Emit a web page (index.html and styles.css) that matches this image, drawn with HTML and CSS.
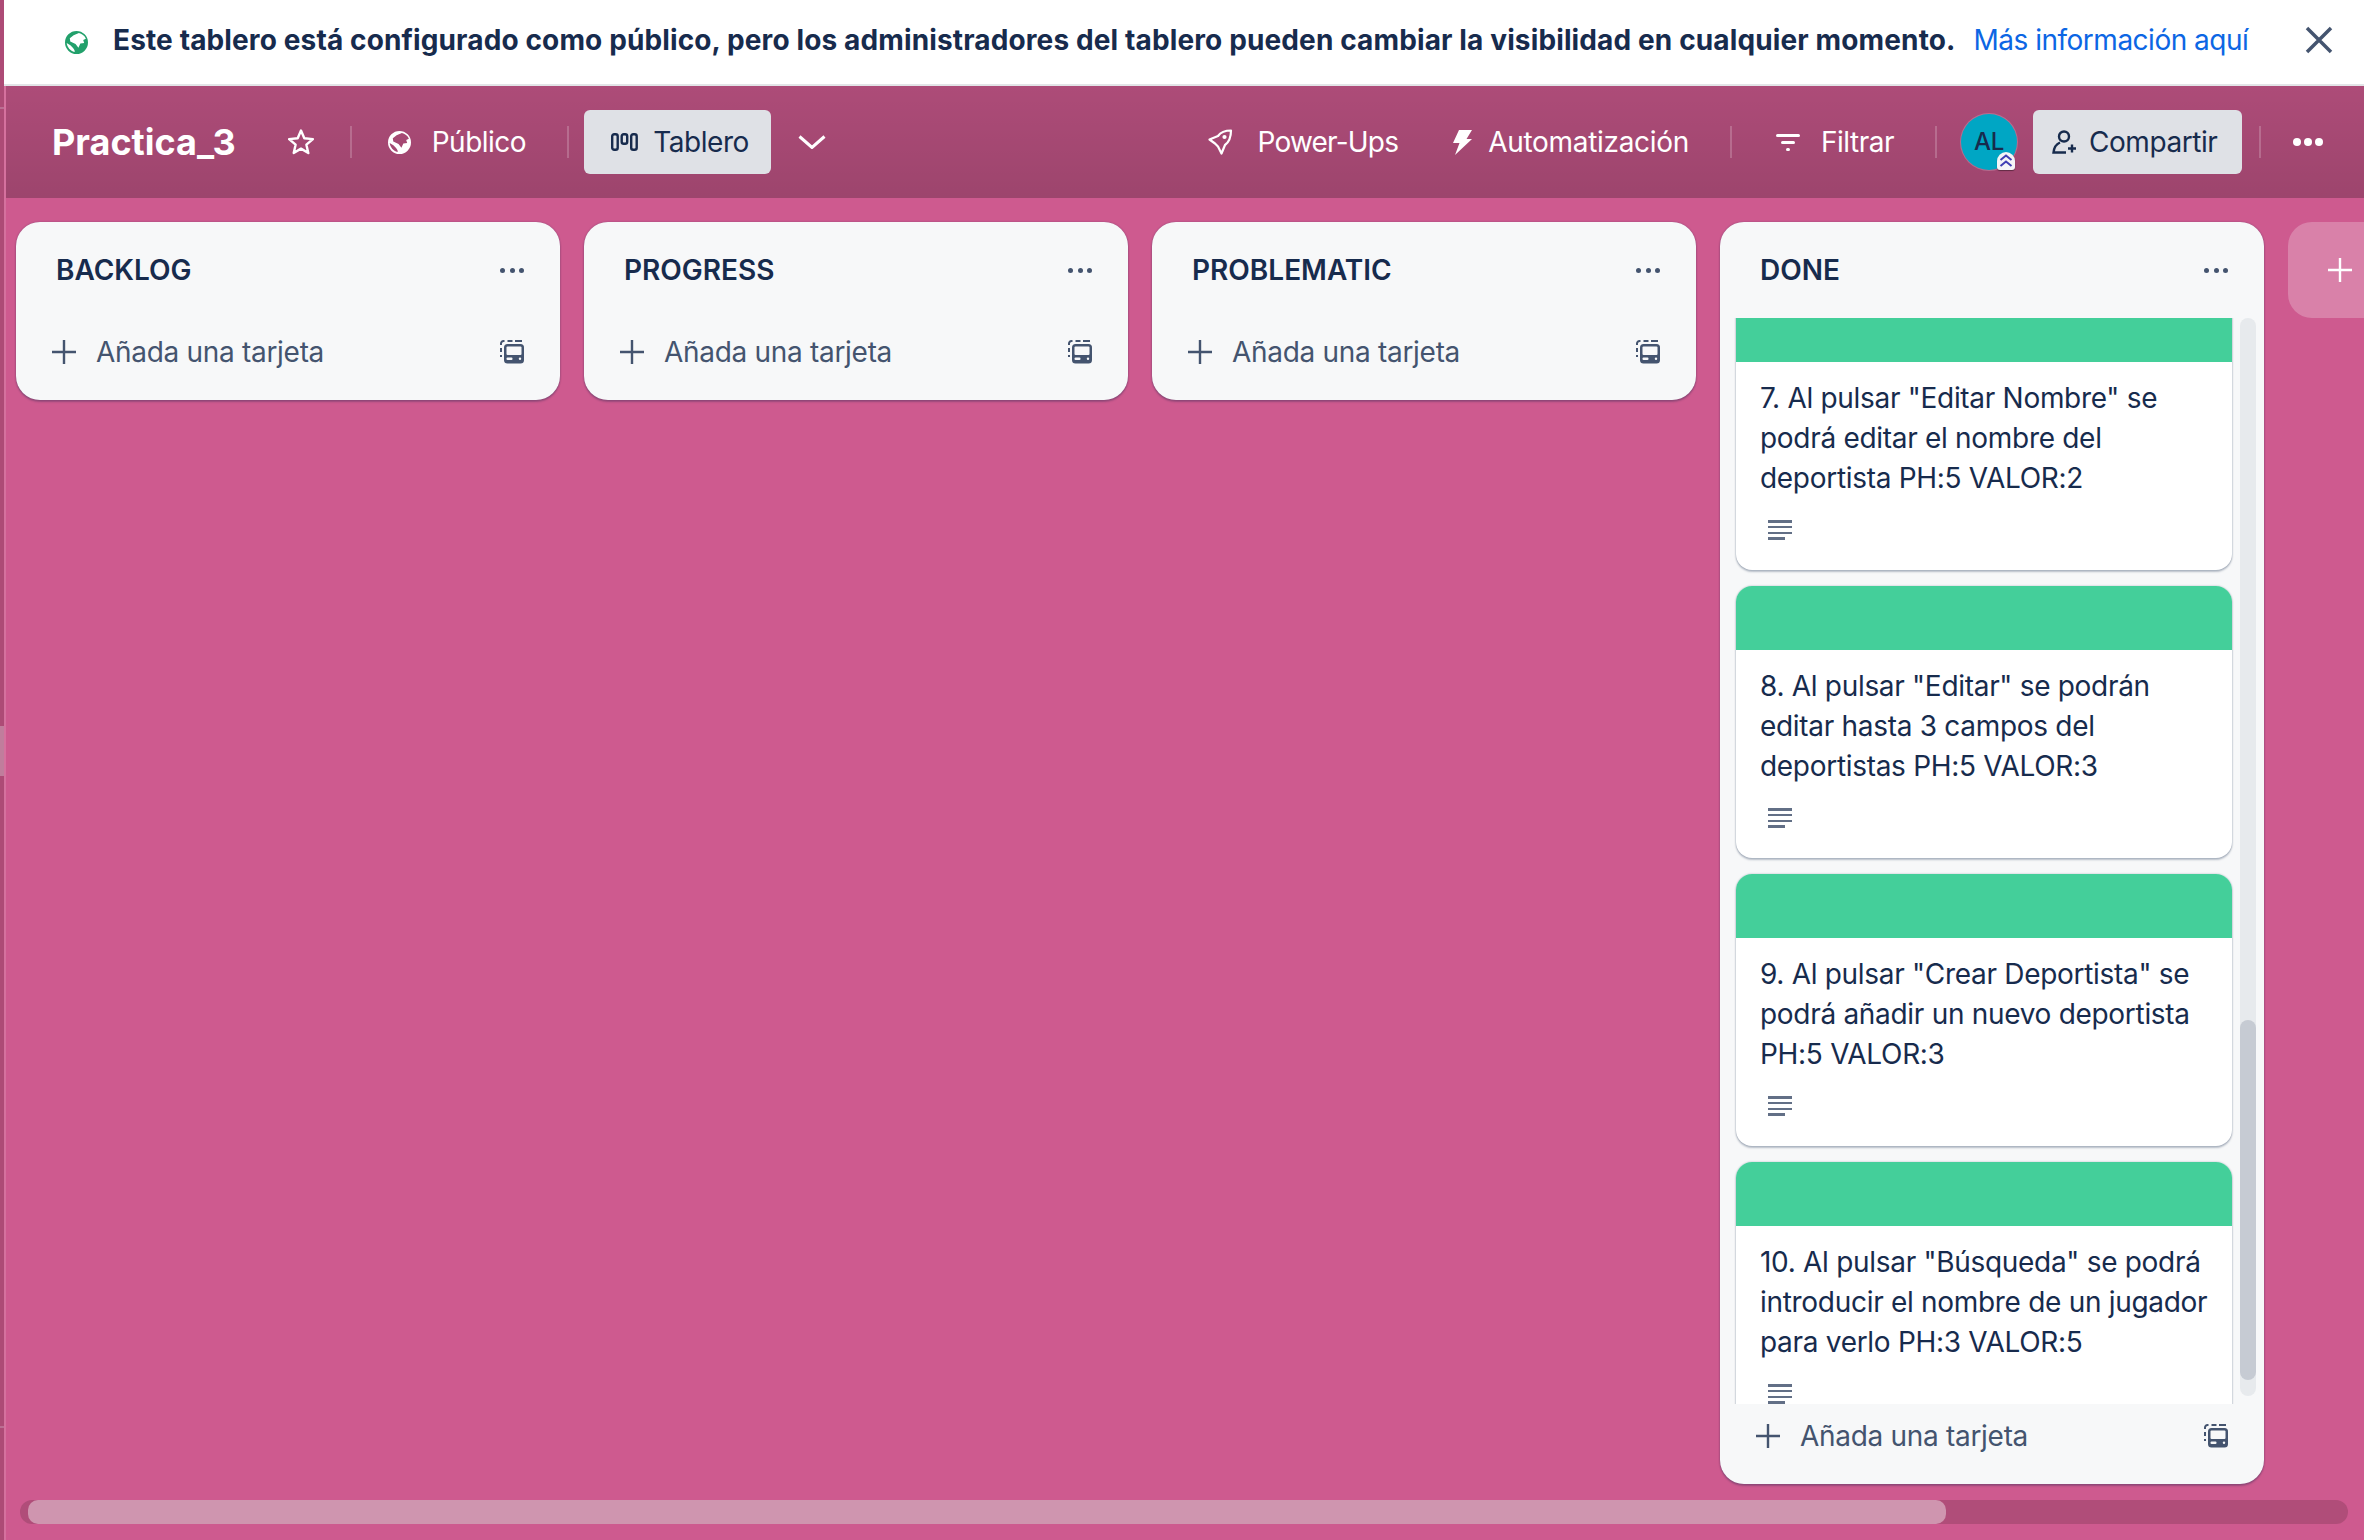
FILE: index.html
```html
<!DOCTYPE html>
<html lang="es">
<head>
  <meta charset="UTF-8">
  <title>Practica_3 | Trello</title>
  <link rel="stylesheet" href="styles.css">
</head>
<body>
  <div class="edge">
    <div class="edge-tick"></div>
    <div class="edge-thumb"></div>
    <div class="edge-tick edge-tick-low"></div>
  </div>
  <div class="page">
    <div class="banner">
      <svg class="banner-globe" viewBox="0 0 24 24"><path fill-rule="evenodd" d="M12 0a12 12 0 1 0 0 24 12 12 0 0 0 0-24zM9 4.500 14.500 2.200C17.500 2.800 20.500 5 21.800 8L19 9.500l1 3-4 .5-2 4.500-3-4-5.500-2.500-.5-3.500zM1.800 12.500C2.200 16.500 5.500 21 10 22c1-2-2.500-6.500-8.200-9.500z"/></svg>
      <span class="banner-text">Este tablero está configurado como público, pero los administradores del tablero pueden cambiar la visibilidad en cualquier momento.</span>
      <a class="banner-link" href="#">Más información aquí</a>
      <svg class="banner-close" viewBox="0 0 28 28"><path d="M2 2l24 24M26 2 2 26"/></svg>
    </div>

    <div class="workspace">
      <!-- Board header -->
      <div class="header">
        <h1 class="board-name">Practica_3</h1>
        <svg class="star" viewBox="0 0 26 26"><path d="M13 1.500l3.300 7.800 8.600.8-6.500 5.600 1.900 8.300-7.300-4.400-7.300 4.400 1.900-8.300-6.500-5.600 8.600-.8z"/></svg>
        <span class="sep sep-star"></span>
        <svg class="icon-public" viewBox="0 0 24 24"><path fill-rule="evenodd" d="M12 0a12 12 0 1 0 0 24 12 12 0 0 0 0-24zM9 4.500 14.500 2.200C17.500 2.800 20.500 5 21.800 8L19 9.500l1 3-4 .5-2 4.500-3-4-5.500-2.500-.5-3.500zM1.800 12.500C2.200 16.500 5.500 21 10 22c1-2-2.500-6.500-8.200-9.500z"/></svg>
        <span class="nav-label label-public">Público</span>
        <span class="sep sep-public"></span>
        <button class="btn btn-board">
          <svg class="icon-board" viewBox="0 0 27 18"><rect x="1.200" y="1.200" width="5.500" height="15.500" rx="2"/><rect x="10.700" y="1.200" width="5.500" height="9.500" rx="2"/><rect x="20.200" y="1.200" width="5.500" height="15.500" rx="2"/></svg>
          Tablero
        </button>
        <svg class="chevron" viewBox="0 0 28 14"><path d="M1.500 1.500 14 12.500 26.500 1.500"/></svg>

        <svg class="rocket" viewBox="0 0 25 26"><path d="M23 1.500C17 1.500 12.500 3.500 10 7L1.500 10.500 7 14.500l3 3 3.500 7L17 16c4-3 6-8 6-14.500z"/><circle cx="16.500" cy="8" r="1"/></svg>
        <span class="nav-label label-power">Power-Ups</span>
        <svg class="bolt" viewBox="0 0 19 25"><path d="M6 0h13l-5.500 9H19L2 25l4.500-12H0z"/></svg>
        <span class="nav-label label-auto">Automatización</span>
        <span class="sep sep-auto"></span>
        <svg class="filter" viewBox="0 0 24 17"><rect width="24" height="3" rx="1.500"/><rect x="5" y="7" width="14" height="3" rx="1.500"/><rect x="10" y="14" width="4" height="3" rx="1.500"/></svg>
        <span class="nav-label label-filter">Filtrar</span>
        <span class="sep sep-filter"></span>
        <div class="avatar">
          AL
          <span class="avatar-badge">
            <svg viewBox="0 0 18 16"><path d="M3.500 7 9 2.500 14.500 7M3.500 13 9 8.500 14.500 13"/></svg>
          </span>
        </div>
        <button class="btn btn-share">
          <svg class="icon-share" viewBox="0 0 25 24"><circle cx="12" cy="6.500" r="5"/><path d="M8 12.500C4.500 14 2 17.500 1.500 22.500H14M20 14.500v8M16 18.500h8"/></svg>
          Compartir
        </button>
        <span class="sep sep-share"></span>
        <div class="dots dots-header"><i></i><i></i><i></i></div>
      </div>

      <!-- Lists -->
      <div class="board">
        <div class="lists">
          <div class="list">
            <div class="list-header">
              <h2>BACKLOG</h2>
              <div class="dots"><i></i><i></i><i></i></div>
            </div>
            <div class="list-empty"></div>
            <div class="list-footer">
              <svg class="plus" viewBox="0 0 24 24"><path d="M12 0v24M0 12h24"/></svg>
              <span class="add-label">Añada una tarjeta</span>
              <svg class="template" viewBox="0 0 24 24"><rect class="template-body" x="4" y="4" width="20" height="19.500" rx="3.500"/><rect class="template-cut" x="6.500" y="6.500" width="15" height="8.500" rx="1"/><rect class="template-cut" x="6.500" y="17.500" width="6" height="2.500" rx="1"/><circle class="template-cut" cx="20" cy="18.700" r="1.200"/><path class="template-dash" d="M1 5V3.500A2.500 2.500 0 0 1 3.500 1H4.500M7.500 1h5M15 1h7M1 8v4M1 15v2"/></svg>
            </div>
          </div>

          <div class="list">
            <div class="list-header">
              <h2>PROGRESS</h2>
              <div class="dots"><i></i><i></i><i></i></div>
            </div>
            <div class="list-empty"></div>
            <div class="list-footer">
              <svg class="plus" viewBox="0 0 24 24"><path d="M12 0v24M0 12h24"/></svg>
              <span class="add-label">Añada una tarjeta</span>
              <svg class="template" viewBox="0 0 24 24"><rect class="template-body" x="4" y="4" width="20" height="19.500" rx="3.500"/><rect class="template-cut" x="6.500" y="6.500" width="15" height="8.500" rx="1"/><rect class="template-cut" x="6.500" y="17.500" width="6" height="2.500" rx="1"/><circle class="template-cut" cx="20" cy="18.700" r="1.200"/><path class="template-dash" d="M1 5V3.500A2.500 2.500 0 0 1 3.500 1H4.500M7.500 1h5M15 1h7M1 8v4M1 15v2"/></svg>
            </div>
          </div>

          <div class="list">
            <div class="list-header">
              <h2>PROBLEMATIC</h2>
              <div class="dots"><i></i><i></i><i></i></div>
            </div>
            <div class="list-empty"></div>
            <div class="list-footer">
              <svg class="plus" viewBox="0 0 24 24"><path d="M12 0v24M0 12h24"/></svg>
              <span class="add-label">Añada una tarjeta</span>
              <svg class="template" viewBox="0 0 24 24"><rect class="template-body" x="4" y="4" width="20" height="19.500" rx="3.500"/><rect class="template-cut" x="6.500" y="6.500" width="15" height="8.500" rx="1"/><rect class="template-cut" x="6.500" y="17.500" width="6" height="2.500" rx="1"/><circle class="template-cut" cx="20" cy="18.700" r="1.200"/><path class="template-dash" d="M1 5V3.500A2.500 2.500 0 0 1 3.500 1H4.500M7.500 1h5M15 1h7M1 8v4M1 15v2"/></svg>
            </div>
          </div>

          <div class="list list-done">
            <div class="list-header">
              <h2>DONE</h2>
              <div class="dots"><i></i><i></i><i></i></div>
            </div>
            <div class="list-body">
              <div class="cards">
                <div class="card card-scrolled">
                  <div class="card-cover"></div>
                  <div class="card-text">7. Al pulsar "Editar Nombre" se podrá editar el nombre del deportista PH:5 VALOR:2</div>
                  <div class="card-badges"><span class="desc-icon"><i></i><i></i><i></i><i></i></span></div>
                </div>
                <div class="card">
                  <div class="card-cover"></div>
                  <div class="card-text">8. Al pulsar "Editar" se podrán editar hasta 3 campos del deportistas PH:5 VALOR:3</div>
                  <div class="card-badges"><span class="desc-icon"><i></i><i></i><i></i><i></i></span></div>
                </div>
                <div class="card">
                  <div class="card-cover"></div>
                  <div class="card-text">9. Al pulsar "Crear Deportista" se podrá añadir un nuevo deportista PH:5 VALOR:3</div>
                  <div class="card-badges"><span class="desc-icon"><i></i><i></i><i></i><i></i></span></div>
                </div>
                <div class="card">
                  <div class="card-cover"></div>
                  <div class="card-text">10. Al pulsar "Búsqueda" se podrá introducir el nombre de un jugador para verlo PH:3 VALOR:5</div>
                  <div class="card-badges"><span class="desc-icon"><i></i><i></i><i></i><i></i></span></div>
                </div>
              </div>
              <div class="v-track"><div class="v-thumb"></div></div>
            </div>
            <div class="list-footer">
              <svg class="plus" viewBox="0 0 24 24"><path d="M12 0v24M0 12h24"/></svg>
              <span class="add-label">Añada una tarjeta</span>
              <svg class="template" viewBox="0 0 24 24"><rect class="template-body" x="4" y="4" width="20" height="19.500" rx="3.500"/><rect class="template-cut" x="6.500" y="6.500" width="15" height="8.500" rx="1"/><rect class="template-cut" x="6.500" y="17.500" width="6" height="2.500" rx="1"/><circle class="template-cut" cx="20" cy="18.700" r="1.200"/><path class="template-dash" d="M1 5V3.500A2.500 2.500 0 0 1 3.500 1H4.500M7.500 1h5M15 1h7M1 8v4M1 15v2"/></svg>
            </div>
          </div>

          <div class="add-list">
            <svg class="plus-white" viewBox="0 0 24 24"><path d="M12 0v24M0 12h24"/></svg>
          </div>
        </div>

        <div class="h-track"><div class="h-thumb"></div></div>
      </div>
    </div>
  </div>
</body>
</html>
```

FILE: styles.css
```css
* {
  margin: 0;
  padding: 0;
  box-sizing: border-box;
}
html,
body {
  width: 2364px;
  height: 1540px;
  overflow: hidden;
}
body {
  display: flex;
  font-family: Inter, "Liberation Sans", sans-serif;
  font-size: 28px;
  line-height: 40px;
  letter-spacing: -0.3px;
  color: #172b4d;
  background-color: #ce5a8f;
}
.edge {
  width: 4px;
  flex-shrink: 0;
  padding-top: 107px;
  background-color: #ad4b76;
}
.edge-tick {
  height: 2px;
  background-color: #bb6f93;
}
.edge-tick-low {
  margin-top: 650px;
}
.edge-thumb {
  height: 50px;
  margin-top: 617px;
  background-color: #c07d9c;
}
.page {
  flex: 1;
  display: flex;
  flex-direction: column;
  min-width: 0;
}

/* Banner */
.banner {
  height: 86px;
  flex-shrink: 0;
  display: flex;
  align-items: center;
  padding: 0 31px 4px 61px;
  background-color: #fff;
  border-bottom: 2px solid #e2e4e7;
}
.banner-globe {
  width: 23px;
  height: 23px;
  fill: #22a06b;
  margin-top: 4px;
}
.banner-text {
  margin-left: 25px;
  font-weight: 700;
  letter-spacing: 0.13px;
  white-space: nowrap;
}
.banner-link {
  margin-left: 18px;
  color: #0c66e4;
  letter-spacing: -0.5px;
  text-decoration: none;
  white-space: nowrap;
}
.banner-close {
  width: 28px;
  height: 28px;
  margin-left: auto;
  fill: none;
  stroke: #44546f;
  stroke-width: 3.500;
}

/* Board header */
.workspace {
  flex: 1;
  display: flex;
  flex-direction: column;
  min-height: 0;
  border-left: 2px solid rgba(255, 255, 255, 0.14);
}
.header {
  height: 112px;
  flex-shrink: 0;
  display: flex;
  align-items: center;
  padding-left: 46px;
  background-image: linear-gradient(rgba(0, 0, 0, 0.16), rgba(0, 0, 0, 0.24));
}
.board-name {
  font-size: 36px;
  line-height: 44px;
  font-weight: 700;
  letter-spacing: 0;
  color: #fff;
  white-space: nowrap;
}
.star {
  width: 26px;
  height: 26px;
  margin-left: 52px;
  fill: none;
  stroke: #fff;
  stroke-width: 2.400;
  stroke-linejoin: round;
}
.sep {
  width: 2px;
  height: 32px;
  flex-shrink: 0;
  background-color: rgba(255, 255, 255, 0.2);
}
.sep-star {
  margin-left: 36px;
}
.icon-public {
  width: 23px;
  height: 23px;
  margin-left: 36px;
  fill: #fff;
}
.nav-label {
  color: #fff;
  letter-spacing: -0.5px;
  white-space: nowrap;
}
.label-public {
  margin-left: 21px;
}
.sep-public {
  margin-left: 41px;
}
.btn {
  height: 64px;
  flex-shrink: 0;
  display: flex;
  align-items: center;
  font: inherit;
  letter-spacing: -0.45px;
  color: #172b4d;
  background-color: #dfe1e6;
  border: none;
  border-radius: 6px;
}
.btn-board {
  width: 187px;
  margin-left: 15px;
  padding-left: 27px;
}
.icon-board {
  width: 27px;
  height: 18px;
  margin-right: 15px;
  fill: none;
  stroke: #172b4d;
  stroke-width: 2.400;
}
.chevron {
  width: 28px;
  height: 14px;
  margin-left: 27px;
  fill: none;
  stroke: #fff;
  stroke-width: 3;
}
.rocket {
  width: 25px;
  height: 26px;
  margin-left: auto;
  fill: none;
  stroke: #fff;
  stroke-width: 2.200;
  stroke-linejoin: round;
}
.label-power {
  margin-left: 25px;
  letter-spacing: -0.8px;
}
.bolt {
  width: 19px;
  height: 25px;
  margin-left: 55px;
  fill: #fff;
}
.label-auto {
  margin-left: 16px;
  letter-spacing: -0.3px;
}
.sep-auto {
  margin-left: 41px;
}
.filter {
  width: 24px;
  height: 17px;
  margin-left: 44px;
  fill: #fff;
}
.label-filter {
  margin-left: 21px;
}
.sep-filter {
  margin-left: 41px;
}
.avatar {
  position: relative;
  width: 56px;
  height: 56px;
  margin-left: 24px;
  flex-shrink: 0;
  display: flex;
  align-items: center;
  justify-content: center;
  font-size: 24px;
  font-weight: 500;
  color: #172b4d;
  background-color: #00a6c4;
  border-radius: 50%;
  box-shadow: 0 0 0 1px rgba(255, 255, 255, 0.2);
}
.avatar-badge {
  position: absolute;
  right: 2px;
  bottom: 0;
  width: 18px;
  height: 18px;
  display: flex;
  background-color: #f4f5f7;
  border-radius: 9px 9px 3px 3px;
  box-shadow: 0 1px 1px rgba(0, 0, 0, 0.4);
}
.avatar-badge svg {
  width: 18px;
  height: 16px;
  margin-top: 1px;
  fill: none;
  stroke: #403fb4;
  stroke-width: 2;
}
.btn-share {
  width: 209px;
  margin-left: 16px;
  padding-left: 19px;
}
.icon-share {
  width: 25px;
  height: 24px;
  margin-right: 12px;
  fill: none;
  stroke: #172b4d;
  stroke-width: 2.400;
}
.sep-share {
  margin-left: 17px;
}
.dots {
  width: 24px;
  display: flex;
  justify-content: space-between;
  flex-shrink: 0;
}
.dots i {
  width: 5px;
  height: 5px;
  background-color: #44546f;
  border-radius: 50%;
}
.dots-header {
  width: 30px;
  margin-left: 32px;
  margin-right: 41px;
}
.dots-header i {
  width: 8px;
  height: 8px;
  background-color: #fff;
}

/* Lists */
.board {
  flex: 1;
  min-height: 0;
  padding: 24px 0 0 10px;
  overflow: hidden;
}
.lists {
  height: 1262px;
  display: flex;
  align-items: flex-start;
  gap: 24px;
}
.list {
  width: 544px;
  flex-shrink: 0;
  background-color: #f7f8f9;
  border-radius: 24px;
  box-shadow: 0 2px 2px rgba(9, 30, 66, 0.25), 0 0 2px rgba(9, 30, 66, 0.31);
}
.list-done {
  height: 100%;
  display: flex;
  flex-direction: column;
}
.list-header {
  height: 96px;
  flex-shrink: 0;
  display: flex;
  align-items: center;
  justify-content: space-between;
  padding: 0 36px 0 40px;
}
.list-header h2 {
  font-size: 28px;
  font-weight: 600;
  letter-spacing: 0;
}
.list-empty {
  height: 2px;
}
.list-footer {
  height: 80px;
  flex-shrink: 0;
  display: flex;
  align-items: center;
  padding: 0 36px 16px 36px;
}
.plus {
  width: 24px;
  height: 24px;
  fill: none;
  stroke: #44546f;
  stroke-width: 2.400;
}
.add-label {
  margin-left: 20px;
  color: #44546f;
}
.template {
  width: 24px;
  height: 24px;
  margin-left: auto;
}
.template-body {
  fill: #44546f;
}
.template-cut {
  fill: #f7f8f9;
}
.template-dash {
  fill: none;
  stroke: #44546f;
  stroke-width: 2;
}

/* Cards */
.list-body {
  flex: 1;
  min-height: 0;
  display: flex;
  padding: 0 8px 0 16px;
}
.cards {
  width: 504px;
  display: flex;
  flex-direction: column;
  gap: 16px;
  padding: 0 4px;
  margin-left: -4px;
  overflow: hidden;
}
.card {
  flex-shrink: 0;
  width: 496px;
  background-color: #fff;
  border-radius: 16px;
  box-shadow: 0 2px 2px rgba(9, 30, 66, 0.25), 0 0 2px rgba(9, 30, 66, 0.31);
  overflow: hidden;
}
.card-scrolled {
  margin-top: -20px;
}
.card-cover {
  height: 64px;
  background-color: #44cf9a;
}
.card-text {
  padding: 16px 24px 0;
}
.card-badges {
  height: 40px;
  margin: 12px 0 20px;
  padding-left: 32px;
  display: flex;
  align-items: center;
}
.desc-icon {
  width: 24px;
  height: 20px;
  display: flex;
  flex-direction: column;
  justify-content: space-between;
}
.desc-icon i {
  height: 2.500px;
  background-color: #626f86;
}
.desc-icon i:last-child {
  width: 17px;
}
.v-track {
  width: 16px;
  height: 1078px;
  margin-left: 4px;
  flex-shrink: 0;
  padding-top: 702px;
  background-color: #e7eaed;
  border-radius: 8px;
}
.v-thumb {
  height: 360px;
  background-color: #c6cbd3;
  border-radius: 8px;
}

.add-list {
  width: 120px;
  height: 96px;
  flex-shrink: 0;
  padding: 36px 0 0 40px;
  background-color: rgba(255, 255, 255, 0.24);
  border-radius: 24px;
}
.plus-white {
  display: block;
  width: 24px;
  height: 24px;
  fill: none;
  stroke: #fff;
  stroke-width: 2.400;
}

/* Horizontal scrollbar */
.h-track {
  width: 2328px;
  height: 24px;
  margin: 16px 0 0 4px;
  padding-left: 8px;
  background-color: #b04d79;
  border-radius: 12px;
}
.h-thumb {
  width: 1918px;
  height: 24px;
  background-color: #cf95af;
  border-radius: 10px;
}
```
